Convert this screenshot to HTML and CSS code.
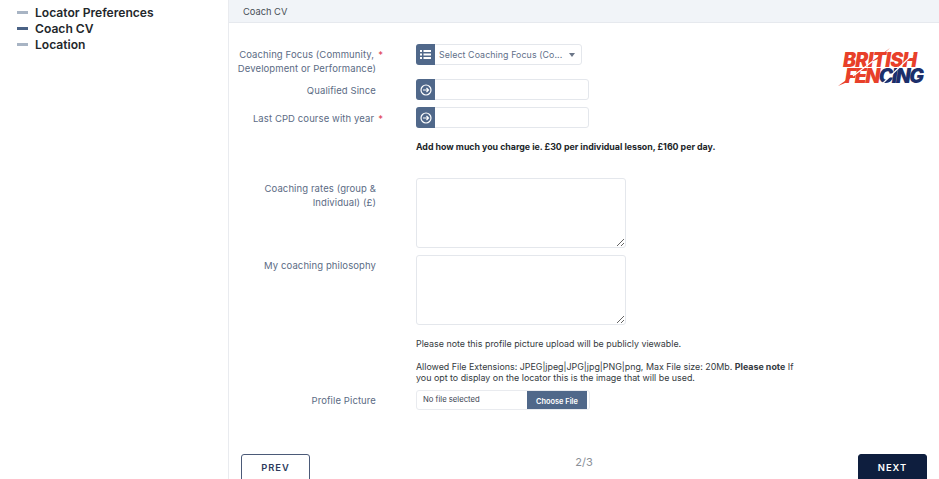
FILE: index.html
```html
<!DOCTYPE html>
<html lang="en">
    <head>
        <meta charset="UTF-8" />
        <meta name="viewport" content="width=device-width, initial-scale=1.0" />
        <title>Coach CV</title>
        <link rel="stylesheet" href="styles.css">
    </head>
    <body>
        <div class="page">
            <div class="sidebar">
                <div class="step"><span class="dash"></span>Locator Preferences</div>
                <div class="step"><span class="dash dash-active"></span>Coach CV</div>
                <div class="step"><span class="dash"></span>Location</div>
            </div>
            <div class="main">
                <div class="header">Coach CV</div>
                <div class="content">
                    <div class="logo">
                        <span class="logo-line">BRITISH</span>
                        <span class="logo-line logo-line-second">FEN<span class="logo-blue">CING</span></span>
                        <svg class="logo-cuts" width="90" height="42" viewBox="0 0 90 42">
                            <path d="M0 36L18 23L7 33Z" fill="#e8402a"/>
                            <path d="M52 -2L33 12L40 9Z" fill="#e8402a"/>
                            <path d="M15 26L35 11" stroke="#fff" stroke-width="1.2"/>
                            <path d="M42 36L75 4" stroke="#fff" stroke-width="1.2"/>
                        </svg>
                    </div>
                    <div class="form">
                        <div class="row row-focus">
                            <label class="label">Coaching Focus (Community,<span class="req">*</span><br>Development or Performance)</label>
                            <div class="group group-select">
                                <span class="addon">
                                    <svg width="11" height="11" viewBox="0 0 11 11" fill="#fff">
                                        <rect x="0" y="1" width="2" height="2"/><rect x="3.5" y="1" width="7.5" height="2"/>
                                        <rect x="0" y="4.5" width="2" height="2"/><rect x="3.5" y="4.5" width="7.5" height="2"/>
                                        <rect x="0" y="8" width="2" height="2"/><rect x="3.5" y="8" width="7.5" height="2"/>
                                    </svg>
                                </span>
                                <span class="select-text">Select Coaching Focus (Co...</span>
                                <span class="caret"></span>
                            </div>
                        </div>
                        <div class="row row-since">
                            <label class="label label-low">Qualified Since</label>
                            <div class="group group-input">
                                <span class="addon">
                                    <svg width="12" height="12" viewBox="0 0 12 12" fill="none" stroke="#fff" stroke-width="1.2">
                                        <circle cx="6" cy="6" r="5"/><path d="M3 6H8.5M6.5 4L8.5 6L6.5 8"/>
                                    </svg>
                                </span>
                            </div>
                        </div>
                        <div class="row row-cpd">
                            <label class="label label-low">Last CPD course with year<span class="req">*</span></label>
                            <div class="group group-input">
                                <span class="addon">
                                    <svg width="12" height="12" viewBox="0 0 12 12" fill="none" stroke="#fff" stroke-width="1.2">
                                        <circle cx="6" cy="6" r="5"/><path d="M3 6H8.5M6.5 4L8.5 6L6.5 8"/>
                                    </svg>
                                </span>
                            </div>
                        </div>
                        <div class="row row-charge">
                            <span></span>
                            <p class="charge">Add how much you charge ie. £30 per individual lesson, £160 per day.</p>
                        </div>
                        <div class="row row-rates">
                            <label class="label">Coaching rates (group &amp;<br>Individual) (£)</label>
                            <textarea class="area"></textarea>
                        </div>
                        <div class="row row-philosophy">
                            <label class="label">My coaching philosophy</label>
                            <textarea class="area"></textarea>
                        </div>
                        <div class="row row-note">
                            <span></span>
                            <div class="notes">
                                <p>Please note this profile picture upload will be publicly viewable.</p>
                                <p class="note-second">Allowed File Extensions: JPEG|jpeg|JPG|jpg|PNG|png, Max File size: 20Mb. <b>Please note</b> If you opt to display on the locator this is the image that will be used.</p>
                            </div>
                        </div>
                        <div class="row row-file">
                            <label class="label">Profile Picture</label>
                            <div class="file">
                                <span class="file-name">No file selected</span>
                                <span class="file-btn">Choose File</span>
                            </div>
                        </div>
                    </div>
                    <div class="footer">
                        <button class="btn btn-prev">PREV</button>
                        <span class="count">2/3</span>
                        <button class="btn btn-next">NEXT</button>
                    </div>
                </div>
            </div>
        </div>
    </body>
</html>
```

FILE: styles.css
```css
html, body {
    margin: 0;
    height: 100%;
    overflow: hidden;
}

body {
    background: #fff;
    font-family: Inter, "Liberation Sans", sans-serif;
    color: #212529;
}

.page {
    display: flex;
    height: 479px;
    overflow: hidden;
}

.sidebar {
    flex: none;
    width: 229px;
    padding-top: 4px;
    box-sizing: border-box;
    border-right: 1px solid #e9ebef;
}

.step {
    display: flex;
    align-items: center;
    height: 16px;
    padding-left: 17px;
    font-size: 12.1px;
    font-weight: 600;
    color: #23272b;
}

.dash {
    width: 11px;
    height: 3px;
    margin-right: 7px;
    background: #a8b4c4;
}

.dash-active {
    background: #4a6285;
}

.main {
    flex: 1;
    min-width: 0;
}

.header {
    height: 17px;
    padding: 5px 0 0 14px;
    background: #f1f4f8;
    border-bottom: 1px solid #e6e9ee;
    font-size: 9.3px;
    line-height: 14px;
    color: #495057;
}

.content {
    position: relative;
    height: 455px;
}

.logo {
    position: absolute;
    top: 27px;
    left: 609px;
    width: 90px;
    height: 38px;
    padding: 2px 0 0 5px;
    box-sizing: border-box;
    font-size: 19.5px;
    line-height: 16px;
    font-weight: 900;
    font-style: italic;
    letter-spacing: -0.7px;
    color: #e8402a;
}

.logo-line {
    display: block;
}

.logo-line-second {
    margin-left: 2px;
    letter-spacing: -1.6px;
}

.logo-blue {
    color: #1c2f6b;
}

.logo-cuts {
    position: absolute;
    top: 0;
    left: 0;
    overflow: visible;
}

.form {
    padding-top: 21px;
}

.row {
    display: grid;
    grid-template-columns: 147px 1fr;
    column-gap: 40px;
}

.label {
    padding-top: 4px;
    font-size: 9.5px;
    line-height: 14px;
    letter-spacing: 0.1px;
    color: #5b6b84;
    text-align: right;
    white-space: nowrap;
}

.label-low {
    padding-top: 5px;
}

.req {
    margin-left: 4px;
    margin-right: -7px;
    color: #e0445a;
}

.row-since {
    margin-top: 3px;
}

.row-cpd {
    margin-top: 7px;
}

.row-charge {
    margin-top: 12px;
}

.row-rates {
    margin-top: 24px;
}

.row-philosophy {
    margin-top: 7px;
}

.row-note {
    margin-top: 13px;
}

.row-file {
    margin-top: 7px;
}

.group {
    display: flex;
    align-items: center;
    height: 21px;
    box-sizing: border-box;
    border: 1px solid #e4e7ec;
    border-radius: 3px;
    background: #fff;
}

.group-select {
    width: 166px;
}

.group-input {
    width: 173px;
}

.addon {
    display: flex;
    flex: none;
    align-items: center;
    justify-content: center;
    width: 19px;
    height: 21px;
    margin-left: -1px;
    background: #50688a;
    border-radius: 3px 0 0 3px;
}

.select-text {
    padding-left: 4px;
    font-size: 8.8px;
    letter-spacing: 0.1px;
    color: #5f6f89;
    white-space: nowrap;
}

.caret {
    margin-left: auto;
    margin-right: 6px;
    border-left: 3px solid transparent;
    border-right: 3px solid transparent;
    border-top: 4px solid #6b7688;
}

.charge {
    margin: 0;
    font-size: 8.8px;
    line-height: 14px;
    font-weight: 700;
    color: #212529;
}

.area {
    display: block;
    width: 210px;
    height: 70px;
    box-sizing: border-box;
    margin: 0;
    border: 1.5px solid #e4e7ec;
    border-radius: 3px;
    background: #fff;
}

.notes {
    width: 385px;
    font-size: 8.9px;
    line-height: 11px;
    color: #343a40;
}

.notes p {
    margin: 0;
}

.notes .note-second {
    margin-top: 12px;
}

.file {
    display: flex;
    width: 174px;
    height: 20px;
    box-sizing: border-box;
    border: 1px solid #e9ebef;
    border-radius: 3px;
}

.file-name {
    width: 110px;
    padding-left: 6px;
    box-sizing: border-box;
    font-size: 7.7px;
    line-height: 17px;
    color: #3b4350;
}

.file-btn {
    width: 60px;
    background: #50688a;
    color: #fff;
    font-size: 7.4px;
    font-weight: 600;
    line-height: 21px;
    text-align: center;
}

.footer {
    position: absolute;
    top: 431px;
    left: 12px;
    right: 12px;
    display: flex;
    justify-content: space-between;
    align-items: flex-start;
}

.btn {
    width: 69px;
    height: 40px;
    padding: 0 0 14px;
    box-sizing: border-box;
    border-radius: 3px;
    font-family: inherit;
    font-size: 9.4px;
    font-weight: 600;
    letter-spacing: 1px;
}

.btn-prev {
    background: #fff;
    border: 1px solid #4b5a78;
    color: #2d3a5c;
}

.btn-next {
    background: #0e1e3e;
    border: 1px solid #0e1e3e;
    color: #fff;
}

.count {
    margin-top: 1px;
    font-size: 11px;
    line-height: 14px;
    color: #8a8f98;
}
```
